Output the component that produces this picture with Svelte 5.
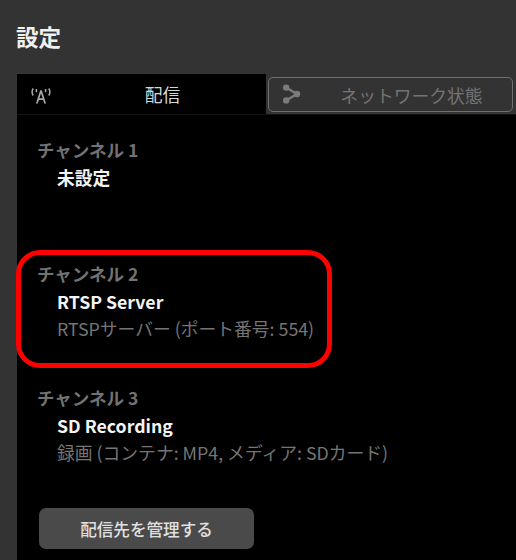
<script>
  const channels = [
    { title: 'チャンネル 1', name: '未設定', desc: '' },
    { title: 'チャンネル 2', name: 'RTSP Server', desc: 'RTSPサーバー (ポート番号: 554)', marked: true },
    { title: 'チャンネル 3', name: 'SD Recording', desc: '録画 (コンテナ: MP4, メディア: SDカード)' },
  ];
</script>

<div class="page">
  <h1>設定</h1>
  <div class="panel">
    <div class="tabs">
      <div class="tab active">
        <svg class="icon" viewBox="0 0 20 16" width="20" height="16" fill="none" stroke="#a8a8a8">
          <path d="M10 2.5 L5.8 15.5 M10 2.5 L14.2 15.5 M7.2 11.2 H12.8" stroke-width="1.7" />
          <path d="M2.2 0.5 Q0 4 2.2 7.5 M17.8 0.5 Q20 4 17.8 7.5" stroke-width="1.5" />
          <path d="M5.4 1 V4.2 M14.6 1 V4.2" stroke-width="1.5" />
        </svg>
        <span>配信</span>
      </div>
      <div class="tab other">
        <svg class="icon" viewBox="0 0 20 20" width="20" height="20" fill="#7c7c7c" stroke="#7c7c7c">
          <path d="M4 3.5 L15 10 L4 16.5" fill="none" stroke-width="2.4" />
          <circle cx="4.2" cy="3.6" r="3.2" stroke="none" />
          <circle cx="15" cy="10" r="3.2" stroke="none" />
          <circle cx="4.2" cy="16.4" r="3.2" stroke="none" />
        </svg>
        <span>ネットワーク状態</span>
      </div>
    </div>
    <div class="list">
      {#each channels as ch}
        <div class="channel">
          {#if ch.marked}<div class="mark"></div>{/if}
          <div class="title">{ch.title}</div>
          <div class="name">{ch.name}</div>
          <div class="desc">{ch.desc}</div>
        </div>
      {/each}
    </div>
    <button>配信先を管理する</button>
  </div>
</div>

<style>
  :global(body) {
    margin: 0;
    background: #333;
  }
  .page {
    width: 516px;
    height: 560px;
    overflow: hidden;
    background: #333;
    font-family: "Noto Sans CJK JP", "Noto Sans", sans-serif;
    display: flex;
    flex-direction: column;
  }
  h1 {
    margin: 0;
    height: 74px;
    padding-left: 16px;
    box-sizing: border-box;
    font-size: 22.5px;
    line-height: 72px;
    font-weight: 700;
    color: #f0f0f0;
  }
  .panel {
    flex: 1;
    margin-left: 17px;
    background: #000;
  }
  .tabs {
    display: flex;
    height: 41px;
    background: #333;
    border-bottom: 1px solid #141414;
    box-sizing: border-box;
  }
  .tab {
    position: relative;
    display: flex;
    align-items: center;
    justify-content: center;
    font-size: 17.8px;
  }
  .tab .icon {
    position: absolute;
  }
  .active {
    width: 249px;
    background: #000;
    color: #d8d8d8;
  }
  .active .icon {
    left: 14px;
    top: 14px;
  }
  .active span {
    margin-left: 42px;
  }
  .other {
    width: 245px;
    height: 35px;
    margin: 3px 0 0 2px;
    box-sizing: border-box;
    border: 1.5px solid #707070;
    border-radius: 5px;
    color: #737373;
  }
  .other .icon {
    left: 13px;
    top: 6px;
  }
  .other span {
    margin-left: 42px;
  }
  .list {
    padding-top: 22px;
  }
  .channel {
    position: relative;
    height: 124px;
    box-sizing: border-box;
    padding-left: 20px;
  }
  .title {
    height: 26px;
    line-height: 26px;
    font-size: 17.5px;
    font-weight: 700;
    color: #727272;
  }
  .name {
    height: 28px;
    line-height: 28px;
    padding-left: 20px;
    font-size: 17.7px;
    font-weight: 700;
    color: #f4f4f4;
  }
  .desc {
    height: 27px;
    line-height: 27px;
    padding-left: 20px;
    font-size: 17.8px;
    color: #757575;
  }
  .mark {
    position: absolute;
    left: -1px;
    top: -11px;
    width: 316px;
    height: 118px;
    box-sizing: border-box;
    border: 5.5px solid #f00;
    border-radius: 24px;
  }
  button {
    display: block;
    width: 215px;
    height: 41px;
    margin: 0 0 0 22px;
    padding: 0;
    border: none;
    border-radius: 7px;
    background: #4a4a4a;
    color: #e0e0e0;
    font-family: inherit;
    font-size: 16.6px;
    font-weight: 500;
    position: relative;
    top: -1px;
  }
</style>
